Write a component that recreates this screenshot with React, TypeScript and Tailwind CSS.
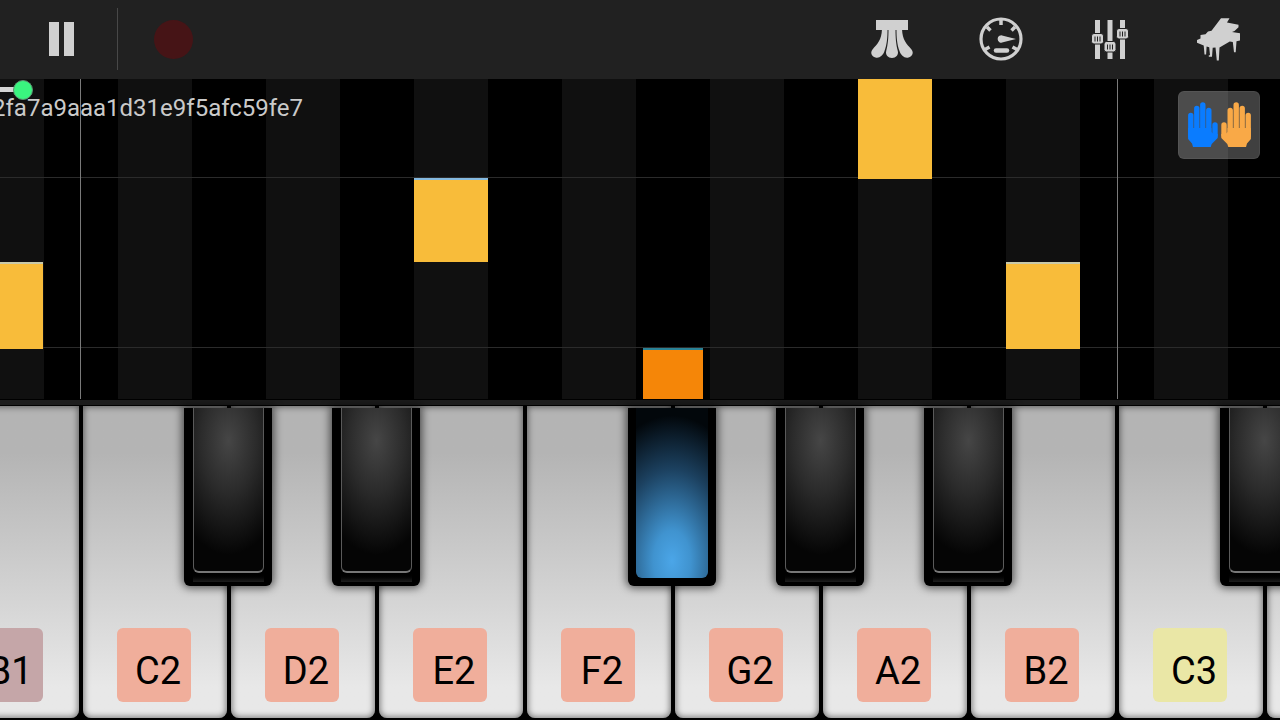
import * as React from 'react';

type WhiteKey = {
  note: string;
  tone?: 'dim' | 'low' | 'high';
  sharp?: boolean;
  pressed?: boolean;
};

const KEYS: WhiteKey[] = [
  { note: 'B1', tone: 'dim' },
  { note: 'C2', tone: 'low', sharp: true },
  { note: 'D2', tone: 'low', sharp: true },
  { note: 'E2', tone: 'low' },
  { note: 'F2', tone: 'low', sharp: true, pressed: true },
  { note: 'G2', tone: 'low', sharp: true },
  { note: 'A2', tone: 'low', sharp: true },
  { note: 'B2', tone: 'low' },
  { note: 'C3', tone: 'high', sharp: true },
  { note: 'D3' },
];

const TONES = {
  dim: 'bg-[#c5a6a8]',
  low: 'bg-[#f0ae9b]',
  high: 'bg-[#eae7a6]',
};

// falling notes, placed on the free canvas of the roll
const NOTES = [
  'left-[858px] top-0 h-[100px] w-[74px] bg-[#f8bc3a]',
  'left-[414px] top-[99px] h-[84px] w-[74px] border-t-2 border-[#85b9df] bg-[#f8bc3a]',
  '-left-[31px] top-[183px] h-[87px] w-[74px] border-t-2 border-[#c9c9a8] bg-[#f8bc3a]',
  'left-[1006px] top-[183px] h-[87px] w-[74px] border-t-2 border-[#c9c9a8] bg-[#f8bc3a]',
  'left-[643px] top-[269px] h-[51px] w-[60px] border-t-2 border-[#2a8296] bg-[#f58608]',
];

function PedalIcon() {
  return (
    <svg width="44" height="40" viewBox="0 0 44 40" fill="#d0d0d0" aria-hidden="true">
      <path d="M6 1h32v10H6z" />
      <path d="M12 10h5.500c0 9-.5 15-3 22-1.500 4.500-5 7.500-9 6.500s-5.500-5-3-8c5-6 9-9 9.500-20.500z" />
      <path d="M32 10h-5.500c0 9 .5 15 3 22 1.500 4.500 5 7.500 9 6.500s5.500-5 3-8c-5-6-9-9-9.500-20.500z" />
      <path d="M18.500 10h7c0 9 .5 15 2.300 22 1 4-2 7-5.800 7s-6.800-3-5.800-7c1.800-7 2.300-13 2.300-22z" />
    </svg>
  );
}

function TempoIcon() {
  return (
    <svg width="44" height="44" viewBox="0 0 44 44" fill="none" stroke="#d0d0d0" aria-hidden="true">
      <circle cx="22" cy="22" r="20" strokeWidth="3.200" />
      <path d="M22 3v5M8 10l3.500 3.500M36 10l-3.500 3.500M6 32.500l4.500-2.500M38 32.500l-4.500-2.500" strokeWidth="3.500" />
      <path d="M37 22l-13 3.300a3.700 3.700 0 1 1 0-6.600z" fill="#d0d0d0" stroke="none" />
      <path d="M17 33.500h11" strokeWidth="4.500" strokeLinecap="round" />
    </svg>
  );
}

function MixerIcon() {
  return (
    <svg width="38" height="40" viewBox="0 0 38 40" aria-hidden="true">
      <path d="M4 1h5v39H4zM16.500 1h5v39h-5zM29 1h5v39h-5z" fill="#d0d0d0" />
      <g fill="#d0d0d0" stroke="#212121">
        <rect x="0.500" y="14.500" width="12" height="10.500" rx="2.500" />
        <rect x="13" y="22.500" width="12" height="10.500" rx="2.500" />
        <rect x="25.500" y="9.500" width="12" height="10.500" rx="2.500" />
      </g>
      <path d="M4 17.500v5M6.500 17.500v5M9 17.500v5M16.500 25.500v5M19 25.500v5M21.500 25.500v5M29 12.500v5M31.500 12.500v5M34 12.500v5" stroke="#212121" />
    </svg>
  );
}

function PianoIcon() {
  return (
    <svg width="44" height="44" viewBox="0 0 44 44" fill="#d0d0d0" aria-hidden="true">
      <path d="M24 1.300h8.500L30 5.500l11.500 2.300v2.500L37.500 14l-2.500 1 8 1.300V23.500l-3.500.8-.8 11h-1.700l-1.200-10.300-3-.5-10.300 6-.7 13h-2l-1.300-13-2.800.2-.7 9h-3.200v-1.500h1.200l-.8-8-2.600-.7-.5 8H7.500l-.8-9L0 25.700V23l3.500-1.500V18l5-.7 2.500-2.800 3.500-.7z" />
    </svg>
  );
}

function Hand({ fill, flip }: { fill: string; flip?: boolean }) {
  return (
    <svg width="30" height="46" viewBox="0 0 30 46" className={flip ? '-scale-x-100' : ''} aria-hidden="true">
      <g fill="none" stroke={fill} strokeWidth="5.400" strokeLinecap="round">
        <path d="M2.800 13.500v20M8.800 6.500v24M14.800 3v26M20.800 8.500v24M27 23v10" />
      </g>
      <path d="M.1 26h23.400v4l2 2h4.200v4l-6 6-1 3H5l-1-3.500L.1 37z" fill={fill} />
    </svg>
  );
}

function ToolButton({ label, children }: { label: string; children: React.ReactNode }) {
  return (
    <button type="button" aria-label={label} className="flex h-full w-[109px] items-center justify-center">
      {children}
    </button>
  );
}

function Toolbar() {
  return (
    <header className="flex h-[79px] shrink-0 items-center justify-between bg-[#212121] pb-px pl-[5px] pr-[7px]">
      <div className="flex h-full items-center">
        <button type="button" aria-label="Pause" className="flex h-full w-28 items-center justify-center gap-[5px]">
          <span className="h-[34px] w-[10px] bg-[#d0d0d0]" />
          <span className="h-[34px] w-[10px] bg-[#d0d0d0]" />
        </button>
        <div className="h-[62px] w-px bg-[#484848]" />
        <button type="button" aria-label="Record" className="flex h-full w-[110px] items-center justify-center">
          <span className="size-[39px] rounded-full bg-[#461416]" />
        </button>
      </div>
      <nav className="flex h-full">
        <ToolButton label="Pedal"><PedalIcon /></ToolButton>
        <ToolButton label="Tempo"><TempoIcon /></ToolButton>
        <ToolButton label="Mixer"><MixerIcon /></ToolButton>
        <ToolButton label="Instrument"><PianoIcon /></ToolButton>
      </nav>
    </header>
  );
}

function NoteRoll() {
  return (
    <section className="relative min-h-[320px] flex-1 overflow-hidden bg-black">
      <div className="absolute inset-y-0 -left-[67px] flex">
        {KEYS.map((k) => (
          <div key={k.note} className="flex w-[148px] shrink-0 justify-center">
            <div className="w-[74px] bg-[#101010]" />
          </div>
        ))}
      </div>
      <div className="absolute inset-x-0 top-[98px] h-px bg-[#2b2b2b]" />
      <div className="absolute inset-x-0 top-[268px] h-px bg-[#2b2b2b]" />
      <div className="absolute inset-y-0 left-20 w-px bg-[#7a7a7a]" />
      <div className="absolute inset-y-0 left-[1117px] w-px bg-[#7a7a7a]" />
      {NOTES.map((cls) => (
        <div key={cls} className={`absolute ${cls}`} />
      ))}
      <div className="absolute left-0 top-2 h-[5px] w-6 bg-[#d4d4d4]" />
      <div className="absolute left-[13px] top-px size-5 rounded-full border border-[#5d8f70] bg-[#3af57f]" />
      <p className="absolute -left-2 top-[15px] whitespace-nowrap text-2xl leading-7 text-[#cacaca]">
        2fa7a9aaa1d31e9f5afc59fe7
      </p>
      <button
        type="button"
        aria-label="Hands"
        className="absolute right-5 top-3 flex h-[68px] w-[82px] items-center justify-center gap-[3px] rounded-md border border-white/5 bg-white/25"
      >
        <Hand fill="#0a7cff" />
        <Hand fill="#f9a947" flip />
      </button>
    </section>
  );
}

function BlackKey({ pressed }: { pressed?: boolean }) {
  return (
    <button
      type="button"
      aria-pressed={!!pressed}
      aria-label="Sharp key"
      className="absolute -right-[43px] top-0.5 z-10 flex h-[178px] w-[88px] flex-col items-center rounded-b-md bg-black shadow-[0_0_9px_2px_rgba(0,0,0,0.6)]"
    >
      {pressed ? (
        <span className="h-[170px] w-[72px] rounded-b-md bg-[radial-gradient(ellipse_130%_90%_at_50%_90%,#4ba6e8_0%,#4093cf_20%,#1c4160_60%,#02070b_95%)]" />
      ) : (
        <>
          <span className="h-[165px] w-[71px] rounded-b-md border-x border-b-2 border-x-[#5a5a5a] border-b-[#777] bg-[radial-gradient(ellipse_90%_70%_at_50%_20%,#464646_0%,#2b2b2b_45%,#050505_100%)]" />
          <span className="h-[9px] w-[71px] bg-linear-to-b from-black to-[#1e1e1e]" />
        </>
      )}
    </button>
  );
}

function Keyboard() {
  return (
    <section className="h-[321px] shrink-0 overflow-hidden bg-black">
      <div className="mt-px h-[5px] bg-[#1c1c1c]" />
      <div className="-ml-[67px] mt-px flex h-[314px]">
        {KEYS.map((k) => (
          <div key={k.note} className="relative w-[148px] shrink-0 px-0.5 pb-0.5">
            <button
              type="button"
              aria-label={k.note}
              className="flex h-full w-full items-end rounded-b-lg bg-linear-to-b from-[#b4b4b4] from-15% to-[#e8e8e8] to-90% pb-4 pl-[34px] shadow-[inset_0_0_6px_1px_rgba(0,0,0,0.5)]"
            >
              {k.tone && (
                <span className={`flex size-[74px] items-center justify-center rounded-md pl-2 pt-3 text-[38px] leading-none text-black ${TONES[k.tone]}`}>
                  {k.note}
                </span>
              )}
            </button>
            {k.sharp && <BlackKey pressed={k.pressed} />}
          </div>
        ))}
      </div>
    </section>
  );
}

export default function App() {
  return (
    <main className="flex min-h-screen flex-col overflow-hidden bg-black font-['Roboto',sans-serif]">
      <Toolbar />
      <NoteRoll />
      <Keyboard />
    </main>
  );
}
